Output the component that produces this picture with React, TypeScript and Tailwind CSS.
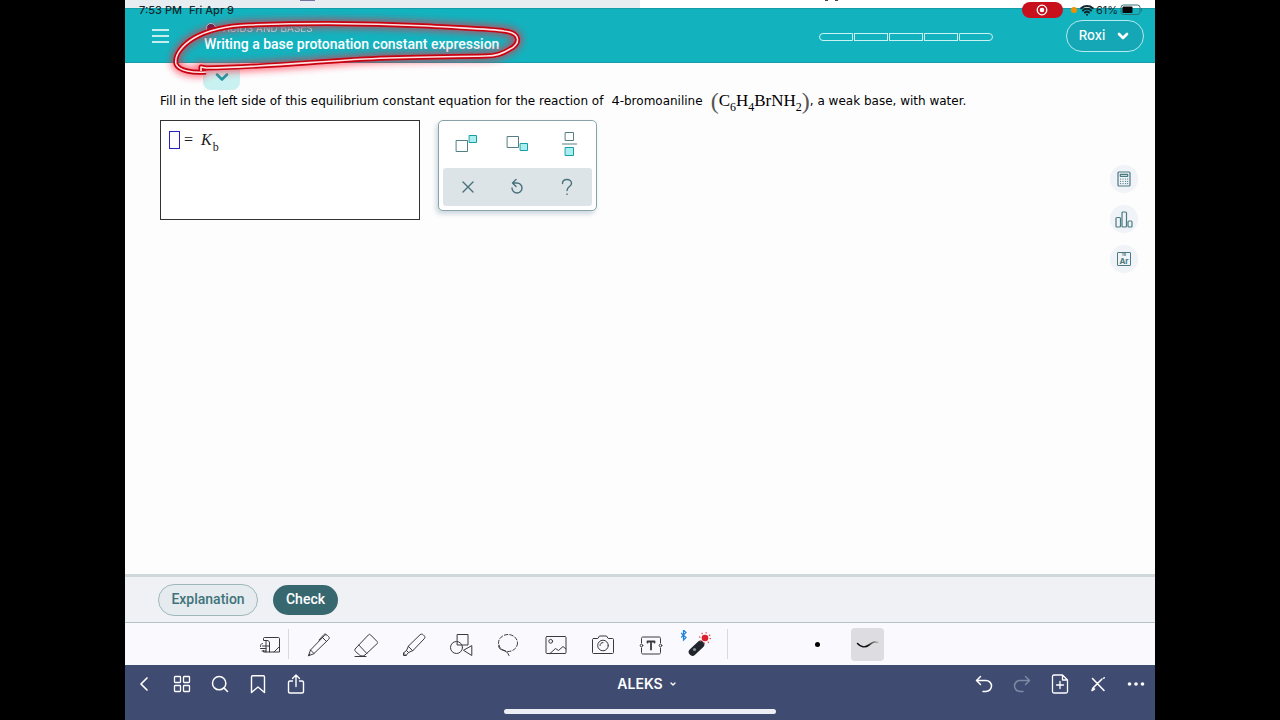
import { ReactNode, useState } from 'react';
import { ChevronDown, ChevronLeft, Search, Wifi } from 'lucide-react';

const cornerTools = [
  { label: 'Calculator', icon: <CalculatorIcon /> },
  { label: 'Data', icon: <BarsIcon /> },
  { label: 'Periodic table', icon: <PeriodicIcon /> },
];

const drawingTools = [
  { label: 'Pen', icon: <PenIcon /> },
  { label: 'Eraser', icon: <EraserIcon /> },
  { label: 'Highlighter', icon: <HighlighterIcon /> },
  { label: 'Shapes', icon: <ShapesIcon /> },
  { label: 'Lasso', icon: <LassoIcon /> },
  { label: 'Image', icon: <ImageIcon /> },
  { label: 'Camera', icon: <CameraIcon /> },
  { label: 'Text', icon: <TextIcon /> },
  { label: 'Laser pointer', icon: <LaserIcon /> },
];

const segments = ['rounded-l-full', '', '', '', 'rounded-r-full'];

function Icon({
  size = 24,
  stroke = 1,
  children,
}: {
  size?: number;
  stroke?: number;
  children: ReactNode;
}) {
  return (
    <svg
      width={size}
      height={size}
      viewBox={`0 0 ${size} ${size}`}
      fill="none"
      stroke="currentColor"
      strokeWidth={stroke}
      strokeLinecap="round"
      strokeLinejoin="round"
      aria-hidden="true"
      className="shrink-0"
    >
      {children}
    </svg>
  );
}

function CalculatorIcon() {
  return (
    <Icon size={18} stroke={1.2}>
      <rect x="3" y="2" width="12" height="14" rx="1" />
      <rect x="5.3" y="4.3" width="7.4" height="2" />
      <path d="M5.500 9h.1M8 9h.1M10.500 9h.1M12.600 9h.1M5.500 11.300h.1M8 11.300h.1M10.500 11.300h.1M12.600 11.300h.1M5.500 13.600h.1M8 13.600h.1M10.500 13.600h.1M12.600 13.600h.1" />
    </Icon>
  );
}

function BarsIcon() {
  return (
    <Icon size={18} stroke={1.2}>
      <rect x="1" y="7.500" width="4.500" height="9.500" rx="1" />
      <rect x="7" y="2" width="4.500" height="15" rx="1" />
      <rect x="13" y="11" width="4" height="6" rx="1" />
    </Icon>
  );
}

function PeriodicIcon() {
  return (
    <span className="flex h-[14px] w-[14px] flex-col items-center justify-center rounded-[1px] border border-[#4b7b80] font-bold">
      <span className="text-[4px] leading-[4px]">18</span>
      <span className="text-[8px] leading-[8px]">Ar</span>
    </span>
  );
}

function ScanIcon() {
  return (
    <Icon size={20}>
      <path d="M3.500 5V3.500c0-.6.400-1 1-1h14c.6 0 1 .4 1 1V17H3.500v-1.500" />
      <path d="M4 5.500h3c1.700 0 2.500 1 2.500 2.500v9M6 5.500V17M9.500 11H2.500M2.500 8.500C1 8.500.5 10 .5 11.500M.5 13.500h5.500M2 16h4M14 17l5.500-5.500" />
    </Icon>
  );
}

function PenIcon() {
  return (
    <Icon>
      <path d="M1.500 22.500l2-5.500L17.500 2.500c1-1 2-1 3 0l1 1c1 1 1 2 0 3L7 20.500z" />
      <path d="M3.500 17L7 20.500M15.500 4.500l4 4M12 7l5-5.500c.8-.8 1.600-.6 2.200 0M1.500 22.500l1.500-1.500" />
    </Icon>
  );
}

function EraserIcon() {
  return (
    <Icon>
      <path d="M1.500 15.500L14.500 1.800c.7-.7 1.300-.7 2 0l6.700 6.800c.7.700.7 1.300 0 2L11 22c-2 1.500-4 1.200-5.500 0l-4-3.500c-1-1-1-2 0-3z" />
      <path d="M4.800 12l8 8.500M1 23.500h11" />
    </Icon>
  );
}

function HighlighterIcon() {
  return (
    <Icon>
      <path d="M6.500 13L18 1.800c1.200-1 2.200-.8 3.200 0l1 1c1 1 .9 2 0 3L11 17.500z" />
      <path d="M6.500 13l-2 4.500 2 2 4.500-2M4.500 17.500L1.500 20l2.500 2.500 2.500-3M1.500 20v2.500H4" />
    </Icon>
  );
}

function ShapesIcon() {
  return (
    <Icon>
      <rect x="8.500" y="1.500" width="10.500" height="10.500" />
      <circle cx="7.500" cy="14.500" r="6" />
      <path d="M22.800 13v9.500l-8-5z" />
    </Icon>
  );
}

function LassoIcon() {
  return (
    <Icon>
      <ellipse cx="12" cy="10" rx="9.500" ry="8.500" strokeDasharray="3.500 2" />
      <path d="M3 12c-1 3 1 4.500 4 5s5 3 6 5.500" />
    </Icon>
  );
}

function ImageIcon() {
  return (
    <Icon>
      <rect x="2" y="3.500" width="20" height="17" rx="1" />
      <circle cx="6.700" cy="8.300" r="1.900" />
      <path d="M6 20.500l5.500-5 3 2 4.500-4 3 2.500" />
    </Icon>
  );
}

function CameraIcon() {
  return (
    <Icon>
      <path d="M2.500 5.500h4.300L8.500 3h7l1.700 2.500h4.300c.6 0 1 .4 1 1v13c0 .6-.4 1-1 1h-19c-.6 0-1-.4-1-1v-13c0-.6.400-1 1-1z" />
      <circle cx="12" cy="12.500" r="5.300" />
      <path d="M9 12.500c0-1.700 1.300-3 3-3" />
    </Icon>
  );
}

function TextIcon() {
  return (
    <Icon>
      <path d="M2.500 10V5.500c0-1 .5-1.500 1.500-1.500h16c1 0 1.500.5 1.500 1.500V10M2.500 15v4.500c0 1 .5 1.500 1.500 1.500h16c1 0 1.500-.5 1.500-1.500V15" />
      <circle cx="2.500" cy="12.500" r="1.300" />
      <circle cx="21.500" cy="12.500" r="1.300" />
      <path d="M8.500 9.500v-1h7v1M12 8.500v8" strokeWidth="1.800" />
    </Icon>
  );
}

function LaserIcon() {
  return (
    <svg width="34" height="30" viewBox="0 0 34 30" fill="none" aria-hidden="true" className="shrink-0">
      <path d="M0 3l5 4.500-2.500 2.500V0L5 2.500 0 7.500" stroke="#1d7fe0" strokeWidth="1.200" />
      <path d="M11.500 22L19.500 14.500" stroke="#20242b" strokeWidth="7.500" strokeLinecap="round" />
      <circle cx="13.500" cy="19.500" r="1.600" fill="#8d9198" />
      <circle cx="24" cy="8" r="3.300" fill="#d9202c" />
      <circle cx="24" cy="8" r="5.300" stroke="#e0525a" strokeWidth="1.600" strokeDasharray="1.100 3.060" />
    </svg>
  );
}

function ToolButton({ label, className, children }: { label: string; className?: string; children: ReactNode }) {
  return (
    <button type="button" aria-label={label} className={`flex items-center justify-center ${className ?? ''}`}>
      {children}
    </button>
  );
}

function StatusBar() {
  return (
    <div className="absolute inset-x-0 top-0 flex h-5 items-center justify-between pl-[14px] pr-3 text-[11px] text-[#12282c]">
      <div className="flex gap-[7px] font-medium">
        <span>7:53 PM</span>
        <span>Fri Apr 9</span>
      </div>
      <div className="flex items-center">
        <span className="flex h-4 w-[41px] items-center justify-center rounded-full bg-[#c8101c] text-white">
          <svg width="12" height="12" viewBox="0 0 12 12" fill="none" aria-hidden="true">
            <circle cx="6" cy="6" r="4.800" stroke="currentColor" strokeWidth="1.300" />
            <circle cx="6" cy="6" r="2.300" fill="currentColor" />
          </svg>
        </span>
        <span className="ml-2 h-[6px] w-[6px] rounded-full bg-[#f29100]" />
        <Wifi className="ml-[3px] h-[14px] w-[14px]" strokeWidth={3.5} />
        <span className="mx-[2px]">61%</span>
        <svg width="23" height="12" viewBox="0 0 23 12" fill="none" aria-hidden="true">
          <rect x="1" y="1" width="19" height="9.500" rx="2.500" stroke="#2c7279" />
          <rect x="2.500" y="2.500" width="10" height="6.500" rx="1" fill="#050708" />
          <path d="M21.500 4.500v3" stroke="#2c7279" />
        </svg>
      </div>
    </div>
  );
}

// Hand drawn loop around the topic title
function InkLoop() {
  const loop =
    'M81 64c-13 1-27-1-30-8c-2-10 8-20 18-26c14-8 30-12 55-13c50-2 120-2 180 1c30 2 64 3 75 5c18 2 16 13 6 18c-8 5-14 7-25 7c-40 1-80 1-120 3c-55 3-100 8-159 9l-5-1v4';
  return (
    <svg width="410" height="90" viewBox="0 0 410 90" fill="none" aria-hidden="true" className="pointer-events-none absolute left-0 top-2">
      <defs>
        <filter id="glow" x="-10%" y="-30%" width="120%" height="160%">
          <feGaussianBlur stdDeviation="3.500" />
        </filter>
      </defs>
      <path d={loop} stroke="#ff2038" strokeWidth="10" opacity="0.6" filter="url(#glow)" />
      <path d={loop} stroke="#c9000f" strokeWidth="5" strokeLinejoin="round" />
      <path d={loop} stroke="#ffe4e4" strokeWidth="1.600" strokeLinejoin="round" />
    </svg>
  );
}

function Header() {
  return (
    <header className="relative">
      <div className="flex h-2 bg-white">
        <div className="w-1/2 bg-[#e8edf1] pl-[175px]">
          <div className="h-px w-[15px] bg-[#7472a3]" />
        </div>
        <div className="flex gap-[7px] pl-[185px]">
          <span className="h-px w-[3px] bg-[#444]" />
          <span className="h-px w-[3px] bg-[#444]" />
        </div>
      </div>
      <div className="flex h-[55px] items-center border-y border-[#149da8] bg-[#12b3bf] pl-[27px] pr-[11px] text-white">
        <button type="button" aria-label="Menu" className="flex w-[17px] flex-col gap-1 text-white">
          <span className="h-[2px] w-full bg-[#c4edf0]" />
          <span className="h-[2px] w-full bg-[#c4edf0]" />
          <span className="h-[2px] w-full bg-[#c4edf0]" />
        </button>
        <div className="ml-[35px] flex-1 pt-1">
          <div className="flex h-3 items-center gap-[7px] pl-[2px]">
            <span className="h-[10px] w-[10px] rounded-full border border-[#a9dfe6] bg-[#35204f]" />
            <span className="bg-linear-to-b from-[#c0ebee]/20 from-40% to-[#c0ebee] to-60% bg-clip-text text-[10px] leading-3 text-transparent">
              ACIDS AND BASES
            </span>
          </div>
          <h1 className="whitespace-nowrap font-[Roboto] text-[14px] font-medium leading-5">
            Writing a base protonation constant expression
          </h1>
        </div>
        <div className="mt-[3px] flex gap-px" role="progressbar" aria-label="Progress" aria-valuenow={0} aria-valuemax={5}>
          {segments.map((rounding, i) => (
            <span key={i} className={`h-[8px] w-[34px] border border-[#c9f3f5] ${rounding}`} />
          ))}
        </div>
        <button
          type="button"
          className="ml-[73px] flex h-8 w-[78px] items-center justify-center gap-[10px] rounded-full border border-[#b5eaee] bg-[#16a7b6] text-[13px] font-medium"
        >
          Roxi
          <ChevronDown className="h-4 w-4" strokeWidth={4} />
        </button>
      </div>
      <StatusBar />
    </header>
  );
}

function MathSymbols() {
  return (
    <div className="h-[91px] w-[159px] shrink-0 rounded-[5px] border border-[#87a5a8] bg-white px-1 pt-1 text-[#557e83] shadow-[-2px_3px_5px_#ccd6dd]">
      <div className="-mx-[2px] grid h-[43px] grid-cols-3 items-center pb-[6px]">
        <ToolButton label="Superscript">
          <Icon>
            <rect x="1.500" y="8.500" width="11" height="11" />
            <rect x="14.500" y="3.500" width="7" height="7" fill="#a9eff0" stroke="#189da6" />
          </Icon>
        </ToolButton>
        <ToolButton label="Subscript">
          <Icon>
            <rect x="1.500" y="4.500" width="11" height="11" />
            <rect x="14.500" y="11.500" width="7" height="7" fill="#a9eff0" stroke="#189da6" />
          </Icon>
        </ToolButton>
        <ToolButton label="Fraction">
          <Icon>
            <rect x="8.500" y=".5" width="8" height="8" />
            <path d="M5.500 12h14" />
            <rect x="8.500" y="15.500" width="8" height="8" fill="#a9eff0" stroke="#189da6" />
          </Icon>
        </ToolButton>
      </div>
      <div className="grid h-[38px] grid-cols-3 rounded-[3px] bg-[#dde4e8] text-[#46717a]">
        <ToolButton label="Clear">
          <Icon size={20} stroke={1.4}>
            <path d="M5 5l10 10M15 5L5 15" />
          </Icon>
        </ToolButton>
        <ToolButton label="Undo">
          <Icon size={20} stroke={1.4}>
            <path d="M5 11a5 5 0 1 0 5-5H6M9 2.500L5.500 6 9 9.500" />
          </Icon>
        </ToolButton>
        <ToolButton label="Help">
          <Icon size={20} stroke={1.4}>
            <path d="M5.500 6.500c0-2.500 2-4 4.500-4s4.500 1.500 4.500 4c0 3-4.500 3.200-4.500 7M10 17v.4" />
          </Icon>
        </ToolButton>
      </div>
    </div>
  );
}

function Formula() {
  return (
    <span className="flex items-center font-['Liberation_Serif',serif] text-[17px] leading-[22px]">
      <span className="text-2xl leading-[22px] text-[#555]">(</span>
      <span>
        C<sub className="-bottom-[5px] text-[12px]">6</sub>H<sub className="-bottom-[5px] text-[12px]">4</sub>BrNH
        <sub className="-bottom-[5px] text-[12px]">2</sub>
      </span>
      <span className="text-2xl leading-[22px] text-[#555]">)</span>
    </span>
  );
}

function Problem() {
  const [answer, setAnswer] = useState('');

  return (
    <main className="flex flex-1 bg-[#fdfdfe]">
      <div className="min-w-0 flex-1 pl-[35px]">
        <button
          type="button"
          aria-label="Show details"
          className="ml-[43px] flex h-[27px] w-[37px] items-center justify-center rounded-b-lg bg-[#c9f1f1] text-[#1a9ba5]"
        >
          <ChevronDown className="h-5 w-5" strokeWidth={3} />
        </button>
        <p className="flex h-[22px] items-center whitespace-nowrap font-['DejaVu_Sans',sans-serif] text-[12px] text-black">
          <span>Fill in the left side of this equilibrium constant equation for the reaction of</span>
          <span className="mx-2">
            <span className="text-[13px]">4</span>-bromoaniline
          </span>
          <Formula />
          <span>, a weak base, with water.</span>
        </p>
        <div className="mt-2 flex gap-[18px]">
          <div className="h-[100px] w-[260px] shrink-0 border border-[#333] bg-white px-2 pt-[9px]">
            <label className="flex items-center font-['Liberation_Serif',serif] text-[16px] leading-5 text-[#222]">
              <input
                aria-label="Left side of the equation"
                value={answer}
                onChange={(e) => setAnswer(e.target.value)}
                className="h-[18px] w-[11px] border border-[#2a1fc0] bg-white outline-none"
              />
              <span className="ml-1">=</span>
              <span className="ml-2">
                <i>K</i>
                <sub className="-bottom-[6px] ml-px text-[12px]">b</sub>
              </span>
            </label>
          </div>
          <MathSymbols />
        </div>
      </div>
      <aside className="flex flex-col gap-3 pr-[17px] pt-[102px]">
        {cornerTools.map((tool) => (
          <ToolButton key={tool.label} label={tool.label} className="h-7 w-7 rounded-full bg-[#f0f3f7] text-[#4b7b80]">
            {tool.icon}
          </ToolButton>
        ))}
      </aside>
    </main>
  );
}

function DrawingBar() {
  return (
    <div className="flex h-[42px] items-center bg-[#faf9fd] pl-[135px] text-[#3a3a3e]">
      <ToolButton label="Zoom window" className="pt-[2px]">
        <ScanIcon />
      </ToolButton>
      <span className="ml-2 h-[30px] w-px bg-[#d9d9df]" />
      <div className="ml-[6px] grid w-[427px] grid-cols-9 items-center pt-[2px]">
        {drawingTools.map((tool) => (
          <ToolButton key={tool.label} label={tool.label}>
            {tool.icon}
          </ToolButton>
        ))}
      </div>
      <span className="ml-[5px] h-[30px] w-px bg-[#d9d9df]" />
      <ToolButton label="Dot" className="ml-[73px] h-8 w-8">
        <span className="h-[5px] w-[5px] rounded-full bg-black" />
      </ToolButton>
      <ToolButton label="Stroke" className="ml-[18px] h-[33px] w-[33px] rounded bg-[#dddce0]">
        <svg width="24" height="12" viewBox="0 0 24 12" fill="none" aria-hidden="true">
          <defs>
            <linearGradient id="fade" x1="0" x2="1">
              <stop offset="0.5" stopColor="#111" />
              <stop offset="1" stopColor="#bbb" />
            </linearGradient>
          </defs>
          <path d="M1.500 5.500c3 3.500 7.500 4.500 11.500 1.500S18 3.500 22 4.500" stroke="url(#fade)" strokeWidth="1.600" strokeLinecap="round" />
        </svg>
      </ToolButton>
    </div>
  );
}

function NavBar() {
  return (
    <nav className="h-[55px] bg-[#3f4b70] text-white">
      <div className="flex h-[38px] items-center">
        <div className="flex flex-1">
          <ToolButton label="Back" className="w-[38px]">
            <ChevronLeft className="h-6 w-6" strokeWidth={1.7} />
          </ToolButton>
          <ToolButton label="Pages" className="w-[38px]">
            <Icon size={20} stroke={1.3}>
              <rect x="2.500" y="2.500" width="6" height="6" rx=".7" />
              <rect x="11.500" y="2.500" width="6" height="6" rx=".7" />
              <rect x="2.500" y="11.500" width="6" height="6" rx=".7" />
              <rect x="11.500" y="11.500" width="6" height="6" rx=".7" />
            </Icon>
          </ToolButton>
          <ToolButton label="Search" className="w-[38px]">
            <Search className="h-5 w-5" strokeWidth={1.8} />
          </ToolButton>
          <ToolButton label="Bookmark" className="w-[38px]">
            <Icon size={20} stroke={1.4}>
              <path d="M3.500 18.500V3c0-.8.400-1.200 1.200-1.200h10.600c.8 0 1.200.4 1.200 1.200v15.500L10 13z" />
            </Icon>
          </ToolButton>
          <ToolButton label="Share" className="w-[38px]">
            <Icon size={20} stroke={1.4}>
              <path d="M6.500 7H4c-1 0-1.500.5-1.500 1.500v9c0 1 .5 1.500 1.500 1.500h12c1 0 1.500-.5 1.500-1.500v-9c0-1-.5-1.500-1.500-1.500h-2.500M10 12.500V1.500M6.500 4.500L10 1l3.500 3.500" />
            </Icon>
          </ToolButton>
        </div>
        <button type="button" className="flex items-center gap-[6px] pl-[14px] text-sm font-semibold">
          ALEKS
          <ChevronDown className="h-2 w-2" strokeWidth={4} />
        </button>
        <div className="flex flex-1 justify-end">
          <ToolButton label="Undo stroke" className="w-[38px]">
            <Icon size={20} stroke={1.5}>
              <path d="M6.500 2.500L2.500 6.500l4 4M2.500 6.500H12a5.500 5.500 0 0 1 0 11H9" />
            </Icon>
          </ToolButton>
          <ToolButton label="Redo stroke" className="w-[38px] text-[#7f89a6]">
            <Icon size={20} stroke={1.5}>
              <path d="M13.500 2.500l4 4-4 4M17.500 6.500H8a5.500 5.500 0 0 0 0 11h3" />
            </Icon>
          </ToolButton>
          <ToolButton label="Add page" className="w-[38px]">
            <Icon size={20} stroke={1.3}>
              <path d="M12.500 1H4C3 1 2.500 1.500 2.500 2.500v15c0 1 .5 1.500 1.500 1.500h12c1 0 1.500-.5 1.500-1.500V6zM12.500 1v5h5M10 7.500v7M6.500 11h7" />
            </Icon>
          </ToolButton>
          <ToolButton label="Read mode" className="w-[38px]">
            <Icon size={20} stroke={1.6}>
              <path d="M4.500 4.500L16 16.500M4 16.500l1-2.500L14 5M16.200 3.800l-.4.4M4 16.500l2.500-1.500" />
            </Icon>
          </ToolButton>
          <ToolButton label="More" className="w-[38px]">
            <Icon size={20}>
              <g fill="currentColor" stroke="none">
                <circle cx="3.500" cy="10" r="1.800" />
                <circle cx="10" cy="10" r="1.800" />
                <circle cx="16.500" cy="10" r="1.800" />
              </g>
            </Icon>
          </ToolButton>
        </div>
      </div>
      <div className="mx-auto mt-[6px] h-[5px] w-[272px] rounded-full bg-[#eceef5]" />
    </nav>
  );
}

export default function App() {
  return (
    <div className="min-h-screen bg-black px-[125px] font-[Inter,sans-serif]">
      <div className="relative flex min-h-screen flex-col">
        <Header />
        <Problem />
        <div className="flex h-[49px] items-center gap-[15px] border-b border-t-[3px] border-b-[#b3c3c6] border-t-[#d0d8db] bg-[#f0f1f5] pl-[33px] font-[Roboto] text-[14px] font-medium">
          <button type="button" className="h-8 w-[100px] rounded-full border border-[#9fb8bb] bg-[#e5ebee] text-[#3f737a]">
            Explanation
          </button>
          <button type="button" className="h-[30px] w-[65px] rounded-full bg-[#38686f] text-white">
            Check
          </button>
        </div>
        <DrawingBar />
        <NavBar />
        <InkLoop />
      </div>
    </div>
  );
}
